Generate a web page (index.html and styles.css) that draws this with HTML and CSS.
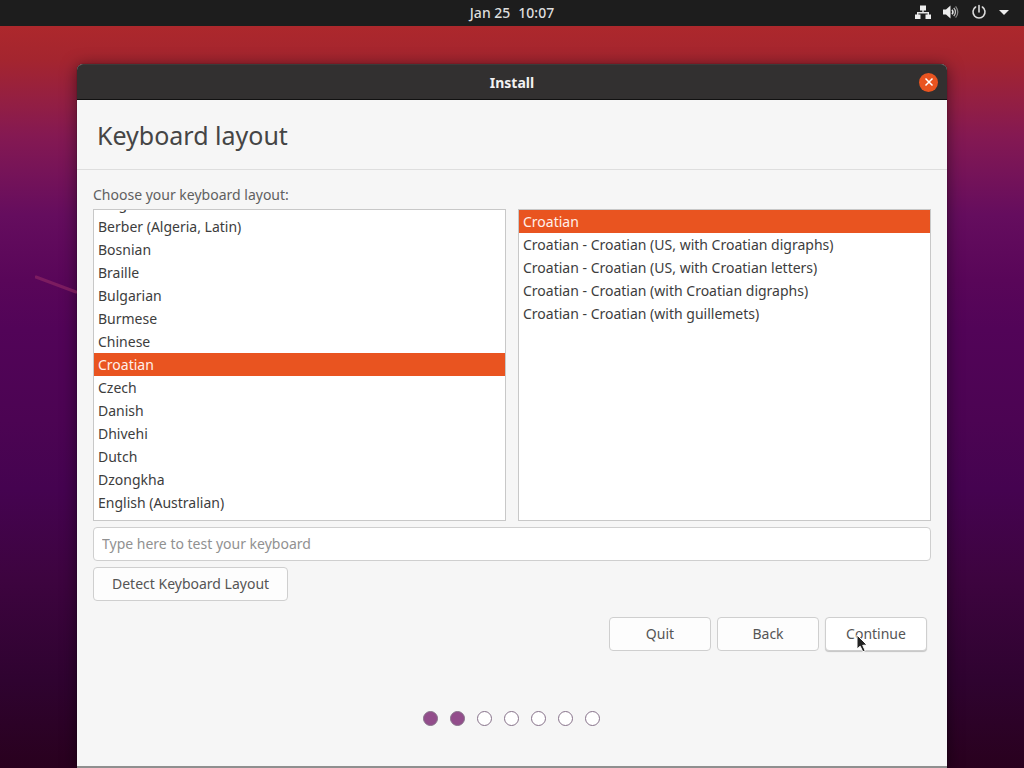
FILE: index.html
```html
<!DOCTYPE html>
<html lang="en">
<head>
<meta charset="utf-8">
<title>Install</title>
<link rel="stylesheet" href="styles.css">
</head>
<body class="desktop">
<svg class="streak" width="42" height="20" viewBox="0 0 42 20" aria-hidden="true"><path d="M1 2 L41 17" stroke="#a03268" stroke-width="3" stroke-linecap="round" opacity=".5"/></svg>
<header class="topbar">
  <time class="clock"><span>Jan 25</span><span>10:07</span></time>
  <div class="tray">
    <svg class="tray-icon" width="16" height="16" viewBox="0 0 16 16" aria-label="Network"><path d="M5 1.500h6v5H5zM0 10.500h5.500v4.500H0zM10.500 10.500H16v4.500h-5.500z" fill="#eee"/><path d="M8 6v3M2.700 11V8.800h10.600V11" fill="none" stroke="#e6e6e6" stroke-width="1.400"/></svg>
    <svg class="tray-icon" width="16" height="16" viewBox="0 0 16 16" aria-label="Volume"><path d="M0 5.500h3l4.500-4v13l-4.500-4H0z" fill="#eee"/><path d="M9 5.700q2 2.300 0 4.600" fill="none" stroke="#e6e6e6" stroke-width="1.500"/><path d="M10.800 3.900q3.400 4.100 0 8.200" fill="none" stroke="#c4c4c4" stroke-width="1.300"/><path d="M12.600 2.300q4.400 5.700 0 11.400" fill="none" stroke="#888" stroke-width="1.200"/></svg>
    <svg class="tray-icon" width="16" height="16" viewBox="0 0 16 16" aria-label="Power"><path d="M4.600 3a6 6 0 1 0 6.800 0M8 1.500v6.500" fill="none" stroke="#dcdcdc" stroke-width="1.600" stroke-linecap="round"/></svg>
    <svg width="10" height="16" viewBox="0 0 10 16" aria-label="Menu"><path d="M0 6h10L5 11z" fill="#eee"/></svg>
  </div>
</header>
<main class="window">
  <div class="titlebar">
    <span class="title">Install</span>
    <button class="close" type="button" aria-label="Close"><svg width="10" height="10" viewBox="0 0 10 10"><path d="M1.500 1.500l7 7M8.500 1.500l-7 7" stroke="#fff" stroke-width="1.500"/></svg></button>
  </div>
  <h1 class="heading">Keyboard layout</h1>
  <form class="content">
    <p class="prompt" id="prompt">Choose your keyboard layout:</p>
    <div class="lists">
      <ul class="list list-scrolled" role="listbox" aria-labelledby="prompt">
        <li class="row" role="option">Belgian</li>
        <li class="row" role="option">Berber (Algeria, Latin)</li>
        <li class="row" role="option">Bosnian</li>
        <li class="row" role="option">Braille</li>
        <li class="row" role="option">Bulgarian</li>
        <li class="row" role="option">Burmese</li>
        <li class="row" role="option">Chinese</li>
        <li class="row selected" role="option" aria-selected="true">Croatian</li>
        <li class="row" role="option">Czech</li>
        <li class="row" role="option">Danish</li>
        <li class="row" role="option">Dhivehi</li>
        <li class="row" role="option">Dutch</li>
        <li class="row" role="option">Dzongkha</li>
        <li class="row" role="option">English (Australian)</li>
        <li class="row" role="option">English (Cameroon)</li>
      </ul>
      <ul class="list" role="listbox" aria-label="Layout variant">
        <li class="row selected" role="option" aria-selected="true">Croatian</li>
        <li class="row" role="option">Croatian - Croatian (US, with Croatian digraphs)</li>
        <li class="row" role="option">Croatian - Croatian (US, with Croatian letters)</li>
        <li class="row" role="option">Croatian - Croatian (with Croatian digraphs)</li>
        <li class="row" role="option">Croatian - Croatian (with guillemets)</li>
      </ul>
    </div>
    <input class="test" type="text" aria-label="Test your keyboard" placeholder="Type here to test your keyboard">
    <button class="button detect" type="button">Detect Keyboard Layout</button>
    <div class="nav">
      <button class="button" type="button">Quit</button>
      <button class="button" type="button">Back</button>
      <button class="button hovered" type="button">Continue
        <svg class="pointer" width="14" height="20" viewBox="0 0 14 20" aria-hidden="true"><path d="M2 1v14l3.200-2.800 2.600 5.600 2.400-1.100-2.500-5.400 4.300-.3z" fill="#222" stroke="#fff" stroke-width="1"/></svg>
      </button>
    </div>
  </form>
  <div class="steps" role="img" aria-label="Step 2 of 7">
    <span class="dot done"></span><span class="dot done"></span><span class="dot"></span><span class="dot"></span><span class="dot"></span><span class="dot"></span><span class="dot"></span>
  </div>
</main>
</body>
</html>
```

FILE: styles.css
```css
* { box-sizing: border-box; }

.desktop {
  margin: 0;
  min-height: 100vh;
  display: flex;
  flex-direction: column;
  font-family: "Noto Sans", "Open Sans", sans-serif;
  font-size: 14px;
  line-height: 23px;
  color: #3d3d3d;
  background: linear-gradient(#ad282c 26px, #a4252f 60px, #941f42 100px, #851952 135px, #771458 170px, #650d5e 215px, #590659 280px, #520458 330px, #4c0453 420px, #450350 490px, #3d043f 580px, #2f0330 680px, #29011e 768px);
}

.streak { position: absolute; left: 35px; top: 275px; }

.topbar {
  height: 26px;
  display: grid;
  grid-template-columns: 1fr auto 1fr;
  align-items: center;
  padding: 0 15px 2px;
  background: #1d1d1d;
  color: #dedede;
}
.clock { grid-column: 2; display: flex; gap: 8px; font-weight: 500; }
.tray { display: flex; justify-content: flex-end; align-items: center; gap: 12px; }

.window {
  flex: 1;
  display: flex;
  flex-direction: column;
  margin: 38px 77px 0;
  background: #f6f6f6;
  border-bottom: 2px solid #8f8f8f;
  border-radius: 6px 6px 0 0;
  box-shadow: 0 2px 16px rgba(0, 0, 0, .5), 0 0 1px rgba(0, 0, 0, .7);
}

.titlebar {
  height: 36px;
  display: grid;
  grid-template-columns: 1fr auto 1fr;
  align-items: center;
  padding: 0 9px;
  background: #323030;
  border-top: 1px solid #3c3a3a;
  border-bottom: 1px solid #111;
  border-radius: 6px 6px 0 0;
  color: #f2f2f2;
}
.title { grid-column: 2; font-weight: 700; }
.close {
  justify-self: end;
  width: 19px;
  height: 19px;
  padding: 0;
  display: grid;
  place-items: center;
  border: 0;
  border-radius: 50%;
  background: #e95420;
}

.heading {
  margin: 0;
  padding: 18px 20px 17px;
  font-size: 25px;
  line-height: 34px;
  font-weight: 400;
  color: #454545;
  border-bottom: 1px solid #dedede;
}

.content { display: flex; flex-direction: column; padding: 13px 16px 0; }
.prompt { margin: 0 0 3px; color: #606060; }

.lists { display: grid; grid-template-columns: 1fr 1fr; gap: 12px; margin-bottom: 6px; }
.list {
  margin: 0;
  padding: 0;
  height: 312px;
  overflow: hidden;
  list-style: none;
  background: #fff;
  border: 1px solid #c8c8c8;
}
.list-scrolled { display: flex; flex-direction: column; justify-content: center; padding-bottom: 2px; }
.row { flex: none; height: 23px; padding: 0 4px; white-space: nowrap; }
.selected { background: #e95420; color: #fff0ea; }

.test {
  height: 34px;
  margin-bottom: 6px;
  padding: 0 8px 2px;
  font: inherit;
  color: #3d3d3d;
  background: #fff;
  border: 1px solid #cfcfcf;
  border-radius: 4px;
}
.test::placeholder { color: #919191; opacity: 1; }

.button {
  position: relative;
  min-width: 102px;
  height: 34px;
  padding: 0 18px 2px;
  font: inherit;
  color: #555;
  background: #fdfdfd;
  border: 1px solid #cfcfcf;
  border-radius: 4px;
}
.detect { align-self: flex-start; }
.nav { display: flex; justify-content: flex-end; gap: 6px; margin-top: 16px; padding-right: 4px; }
.hovered { background: #fff; box-shadow: 0 1px 1px rgba(0, 0, 0, .2); }
.pointer { position: absolute; left: 29px; top: 16px; }

.steps { display: flex; justify-content: center; gap: 12px; padding: 60px 2px 40px 0; }
.dot { width: 15px; height: 15px; border: 1px solid #87728a; border-radius: 50%; background: #fff; }
.done { background: #924d8b; }
```
